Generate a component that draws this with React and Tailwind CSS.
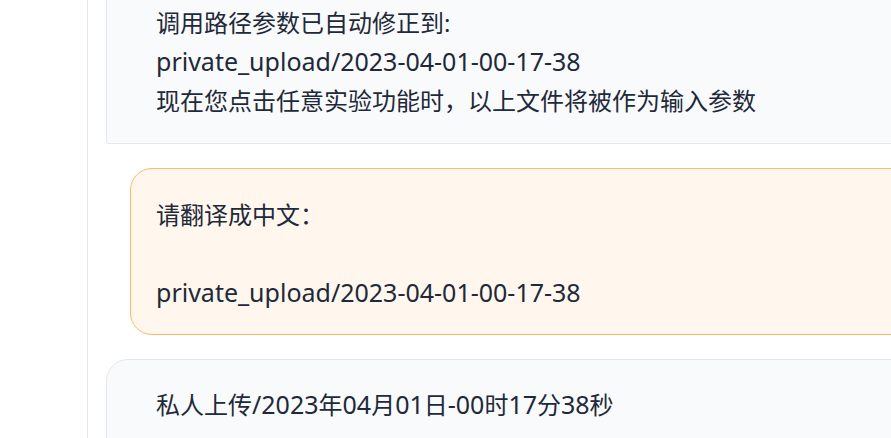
function Latin({ children }) {
  return <span className="text-[25px]">{children}</span>;
}

export default function App() {
  return (
    <div className="w-[891px] h-[438px] overflow-hidden bg-white flex font-['Noto_Sans','Noto_Sans_CJK_SC',sans-serif] text-[24px] leading-[39px] text-gray-800">
      <aside className="w-[88px] shrink-0 border-r border-gray-200" />
      <main className="flex-1 flex flex-col pl-[18px] -mr-10">
        <div className="-mt-[25px] bg-gray-50 border border-gray-200 rounded-tr-[22px] rounded-br-[22px] rounded-bl-[3px] pl-[49px] pr-6 pt-[27px] pb-[23px]">
          <p>调用路径参数已自动修正到:</p>
          <p><Latin>private_upload/2023-04-01-00-17-38</Latin></p>
          <p>现在您点击任意实验功能时，以上文件将被作为输入参数</p>
        </div>
        <div className="mt-6 ml-6 bg-orange-50 border border-orange-300 rounded-[22px] rounded-br-[3px] pl-[25px] pr-6 pt-[26px] pb-[22px]">
          <p>请翻译成中文：</p>
          <p>&nbsp;</p>
          <p><Latin>private_upload/2023-04-01-00-17-38</Latin></p>
        </div>
        <div className="mt-[24px] bg-gray-50 border border-gray-200 rounded-[22px] rounded-bl-[3px] pl-[49px] pr-6 pt-[25px] pb-[23px]">
          <p>私人上传<Latin>/2023</Latin>年<Latin>04</Latin>月<Latin>01</Latin>日<Latin>-00</Latin>时<Latin>17</Latin>分<Latin>38</Latin>秒</p>
        </div>
      </main>
    </div>
  );
}
